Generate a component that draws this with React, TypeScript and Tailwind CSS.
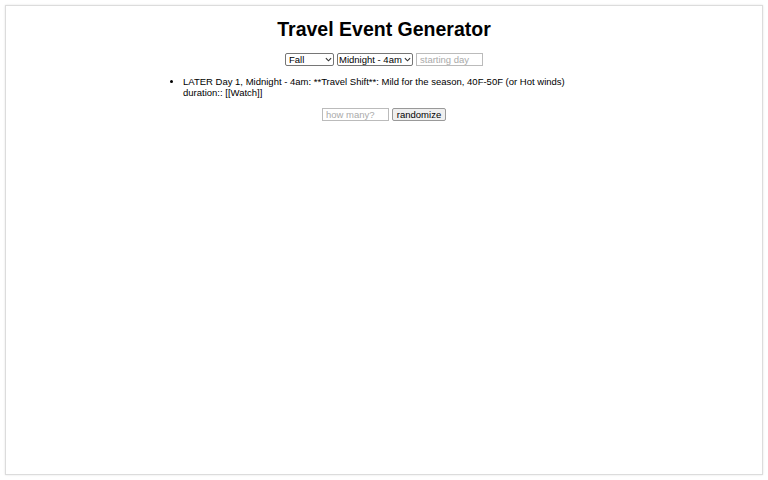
import { useState } from "react";

const seasons = ["Spring", "Summer", "Fall", "Winter"];
const watches = ["Midnight - 4am", "4am - 8am", "8am - Noon", "Noon - 4pm", "4pm - 8pm", "8pm - Midnight"];

function Chevron() {
  return (
    <svg
      viewBox="0 0 8 5"
      className="pointer-events-none absolute right-[2px] top-[4px] w-[7px] h-[5px]"
      fill="none"
      stroke="#333"
      strokeWidth="1.3"
    >
      <path d="M1 1l3 3 3-3" />
    </svg>
  );
}

export default function App() {
  const [season, setSeason] = useState("Fall");
  const [watch, setWatch] = useState("Midnight - 4am");

  return (
    <div className="h-[480px] p-[5px] bg-white font-['Liberation_Sans',Arial,sans-serif] text-black">
      <div className="h-full border border-[#dcdcdc] shadow-[0_0_2px_#e4e4e4]">
        <h1 className="text-center font-bold text-[19.5px] leading-[24px] pt-[11px]">Travel Event Generator</h1>

        <div className="flex justify-center gap-[3px] mt-[12px] text-[9.5px]">
          <div className="relative flex">
            <select
              value={season}
              onChange={(e) => setSeason(e.target.value)}
              className="appearance-none w-[49px] h-[13px] border border-[#767676] rounded-[2px] bg-white text-[9.5px] leading-[11px] pl-[3px] pr-[10px] py-0"
            >
              {seasons.map((s) => (
                <option key={s}>{s}</option>
              ))}
            </select>
            <Chevron />
          </div>
          <div className="relative flex">
            <select
              value={watch}
              onChange={(e) => setWatch(e.target.value)}
              className="appearance-none w-[76px] h-[13px] border border-[#767676] rounded-[2px] bg-white text-[9.5px] leading-[11px] pl-[1px] pr-[8px] py-0"
            >
              {watches.map((w) => (
                <option key={w}>{w}</option>
              ))}
            </select>
            <Chevron />
          </div>
          <input
            placeholder="starting day"
            className="w-[67px] h-[13px] border border-[#bbb] px-[3px] text-[9.5px] leading-[11px] placeholder:text-[#aaa]"
          />
        </div>

        {/* generated events */}
        <ul className="w-[420px] mx-auto mt-[10px] pl-[9px] list-disc text-[9.5px] leading-[11px]">
          <li>
            LATER Day 1, Midnight - 4am: **Travel Shift**: Mild for the season, 40F-50F (or Hot winds) duration:: [[Watch]]
          </li>
        </ul>

        <div className="flex justify-center gap-[3px] mt-[10px] text-[9.5px]">
          <input
            placeholder="how many?"
            className="w-[67px] h-[13px] border border-[#bbb] px-[3px] text-[9.5px] leading-[11px] placeholder:text-[#aaa]"
          />
          <button className="w-[54px] h-[13px] px-0 border border-[#999] rounded-[2px] bg-[#efefef] text-[9.5px] leading-[11px]">
            randomize
          </button>
        </div>
      </div>
    </div>
  );
}
